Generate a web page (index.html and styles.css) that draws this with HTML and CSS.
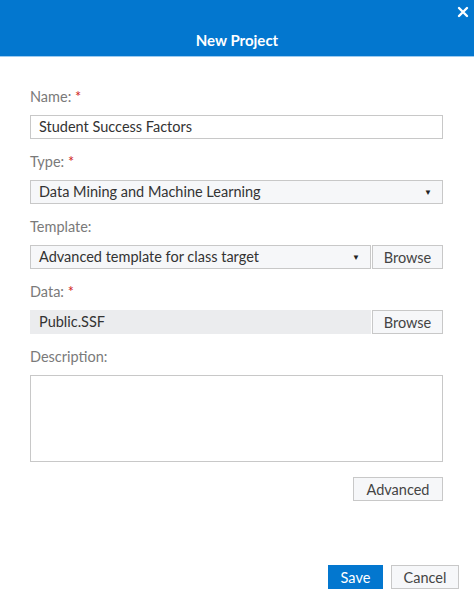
FILE: index.html
```html
<!DOCTYPE html>
<html>
<head>
<meta charset="utf-8">
<link rel="stylesheet" href="styles.css">
</head>
<body>
<div class="dialog">
  <header class="header">
    <span class="close">
      <svg width="12" height="12" viewBox="0 0 12 12"><path d="M2 2L10 10M10 2L2 10" stroke="#fff" stroke-width="2.4" stroke-linecap="round"/></svg>
    </span>
    <h1 class="title">New Project</h1>
  </header>
  <main class="form">
    <div class="group">
      <label class="label">Name: <span class="req">*</span></label>
      <div class="field input">Student Success Factors</div>
    </div>
    <div class="group">
      <label class="label">Type: <span class="req">*</span></label>
      <div class="field select">Data Mining and Machine Learning<span class="caret">&#9660;</span></div>
    </div>
    <div class="group">
      <label class="label">Template:</label>
      <div class="row">
        <div class="field select grow">Advanced template for class target<span class="caret">&#9660;</span></div>
        <button class="btn">Browse</button>
      </div>
    </div>
    <div class="group">
      <label class="label">Data: <span class="req">*</span></label>
      <div class="row">
        <div class="field readonly grow">Public.SSF</div>
        <button class="btn">Browse</button>
      </div>
    </div>
    <div class="group">
      <label class="label">Description:</label>
      <div class="field textarea"></div>
    </div>
    <div class="adv-row">
      <button class="btn adv">Advanced</button>
    </div>
  </main>
  <footer class="footer">
    <button class="btn primary">Save</button>
    <button class="btn cancel">Cancel</button>
  </footer>
</div>
</body>
</html>
```
FILE: styles.css
```css
html, body {
  margin: 0;
  padding: 0;
  background: #fff;
}
body {
  font-family: Lato, "Noto Sans", sans-serif;
  color: #333;
  width: 474px;
  height: 598px;
  overflow: hidden;
}
.dialog {
  display: flex;
  flex-direction: column;
  height: 598px;
}
.header {
  position: relative;
  background: #0377cf;
  height: 56px;
  border-bottom: 1px solid #9ccbf0;
  display: flex;
  align-items: flex-end;
  justify-content: center;
}
.title {
  margin: 0 0 6px 0;
  color: #fff;
  font-size: 15px;
  font-weight: 700;
  line-height: 20px;
}
.close {
  position: absolute;
  top: 6px;
  right: 5px;
  width: 12px;
  height: 12px;
  display: flex;
}
.form {
  padding: 30px 31px 0 30px;
  display: flex;
  flex-direction: column;
  gap: 13px;
}
.group {
  display: flex;
  flex-direction: column;
  gap: 8px;
}
.label {
  font-size: 14.5px;
  line-height: 20px;
  color: #7a7a7a;
}
.req {
  color: #d01a1a;
}
.field {
  box-sizing: border-box;
  height: 24px;
  border: 1px solid #c8c8c8;
  font-size: 14.5px;
  line-height: 22px;
  padding: 0 8px;
  color: #333;
  position: relative;
  background: #fff;
}
.select {
  background: #f6f7f9;
}
.caret {
  position: absolute;
  right: 10px;
  top: 0;
  font-size: 8px;
  color: #222;
}
.readonly {
  background: #ebecee;
  border-color: #ebecee;
}
.textarea {
  height: 87px;
}
.row {
  display: flex;
  gap: 1px;
}
.grow {
  flex: 1;
}
.btn {
  box-sizing: border-box;
  height: 24px;
  border: 1px solid #c8c8c8;
  background: #f6f7f9;
  font-family: Lato, "Noto Sans", sans-serif;
  font-size: 14.5px;
  color: #444;
  padding: 0 8px;
  margin: 0;
  width: 71px;
}
.adv-row {
  display: flex;
  justify-content: flex-end;
  margin-top: 2px;
}
.btn.adv {
  width: 90px;
}
.footer {
  margin-top: auto;
  display: flex;
  justify-content: flex-end;
  gap: 8px;
  padding: 0 15px 9px 0;
}
.btn.primary {
  width: 55px;
  background: #0377cf;
  border-color: #0377cf;
  color: #fff;
}
.btn.cancel {
  width: 68px;
}
```
